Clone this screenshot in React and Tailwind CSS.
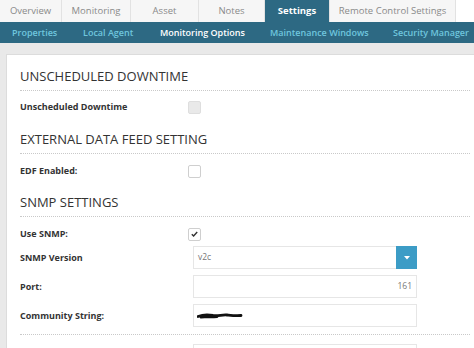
import React from 'react';

const topTabs = [
  { label: 'Overview', w: 'w-[62px]' },
  { label: 'Monitoring', w: 'w-[69px]' },
  { label: 'Asset', w: 'w-[68px]' },
  { label: 'Notes', w: 'w-[66px]' },
  { label: 'Settings', w: 'w-[65px]', active: true },
  { label: 'Remote Control Settings', w: 'w-[126px]' },
];

const subTabs = [
  { label: 'Properties', w: 'w-[71px]' },
  { label: 'Local Agent', w: 'w-[77px]' },
  { label: 'Monitoring Options', w: 'w-[110px]', active: true },
  { label: 'Maintenance Windows', w: 'w-[123px]' },
  { label: 'Security Manager', w: 'w-[80px]' },
];

const SectionHeading = ({ children, className = '' }) => (
  <div className={`h-[24px] border-b border-dotted border-[#c9c9c9] text-[13px] leading-[18px] text-[#333] uppercase ${className}`}>
    {children}
  </div>
);

const Label = ({ children }) => (
  <div className="w-[168px] shrink-0 text-[9px] font-bold text-[#333]">{children}</div>
);

const Checkbox = ({ checked, disabled }) => (
  <div
    className={`w-[13px] h-[13px] rounded-[2px] border flex items-center justify-center ${
      disabled ? 'bg-[#e9e9e9] border-[#dedede]' : 'bg-white border-[#cfcfcf]'
    }`}
  >
    {checked && (
      <svg width="7" height="6" viewBox="0 0 7 6">
        <path d="M0.8 3.2 L2.6 5 L6.2 1" fill="none" stroke="#333" strokeWidth="1.4" />
      </svg>
    )}
  </div>
);

const Field = ({ children, className = '' }) => (
  <div className={`ml-[5px] w-[224px] h-[23px] border border-[#e6e6e6] bg-white flex items-center text-[8.5px] text-[#777] ${className}`}>
    {children}
  </div>
);

export default function App() {
  return (
    <div className="w-[474px] h-[348px] overflow-hidden bg-[#e9e9e9]" style={{ fontFamily: '"Open Sans", "Liberation Sans", sans-serif' }}>
      {/* top tabs */}
      <div className="flex h-[22px] bg-[#f6f6f6]">
        {topTabs.map((t) => (
          <div
            key={t.label}
            className={`${t.w} shrink-0 flex items-center justify-center whitespace-nowrap text-[9.5px] border-r border-[#e2e2e2] ${
              t.active ? 'bg-[#2d6983] text-white font-bold border-[#2d6983]' : 'text-[#8a8a8a]'
            }`}
          >
            {t.label}
          </div>
        ))}
        <div className="flex-1 bg-white" />
      </div>

      {/* sub nav */}
      <div className="flex items-center h-[21px] bg-[#2d6983] pl-[12px]">
        {subTabs.map((t) => (
          <div
            key={t.label}
            className={`${t.w} shrink-0 whitespace-nowrap text-[9px] font-semibold ${t.active ? 'text-white' : 'text-[#6fc6de]'}`}
          >
            {t.label}
          </div>
        ))}
      </div>

      {/* panel */}
      <div className="pt-[11px] pl-[6px]">
        <div className="bg-white border-l border-t border-[#dcdcdc] h-[300px] pl-[13px] pr-[4px] pt-[12px]">
          <SectionHeading>Unscheduled Downtime</SectionHeading>
          <div className="flex items-center h-[22px] mt-[5px]">
            <Label>Unscheduled Downtime</Label>
            <Checkbox disabled />
          </div>

          <SectionHeading className="mt-[12px]">External Data Feed Setting</SectionHeading>
          <div className="flex items-center h-[22px] mt-[6px]">
            <Label>EDF Enabled:</Label>
            <Checkbox />
          </div>

          <SectionHeading className="mt-[11px]">SNMP Settings</SectionHeading>
          <div className="flex items-center h-[20px] mt-[7px]">
            <Label>Use SNMP:</Label>
            <Checkbox checked />
          </div>
          <div className="flex items-center mt-[2px]">
            <Label>SNMP Version</Label>
            <Field className="justify-between">
              <span className="pl-[4px]">v2c</span>
              <div className="w-[21px] h-[23px] -mr-px bg-[#3c9cc6] flex items-center justify-center">
                <svg width="6" height="4" viewBox="0 0 6 4">
                  <path d="M0 0 H6 L3 3.5 Z" fill="#fff" />
                </svg>
              </div>
            </Field>
          </div>
          <div className="flex items-center mt-[6px]">
            <Label>Port:</Label>
            <Field className="justify-end">
              <span className="pr-[4px]">161</span>
            </Field>
          </div>
          <div className="flex items-center mt-[6px] pb-[7px] border-b border-dotted border-[#c9c9c9]">
            <Label>Community String:</Label>
            <Field>
              <svg width="46" height="8" viewBox="0 0 46 8" className="ml-[3px]">
                <path
                  d="M1 4.5 C5 3 10 2.5 16 3.5 C21 4.5 25 2.5 30 3 C35 3.5 39 4 44 3.5 M4 5 C9 4.5 14 5.5 20 4.5"
                  fill="none"
                  stroke="#111"
                  strokeWidth="2.8"
                  strokeLinecap="round"
                />
              </svg>
            </Field>
          </div>
          <div className="flex items-center mt-[9px]">
            <div className="w-[168px] shrink-0" />
            <Field />
          </div>
        </div>
      </div>
    </div>
  );
}
